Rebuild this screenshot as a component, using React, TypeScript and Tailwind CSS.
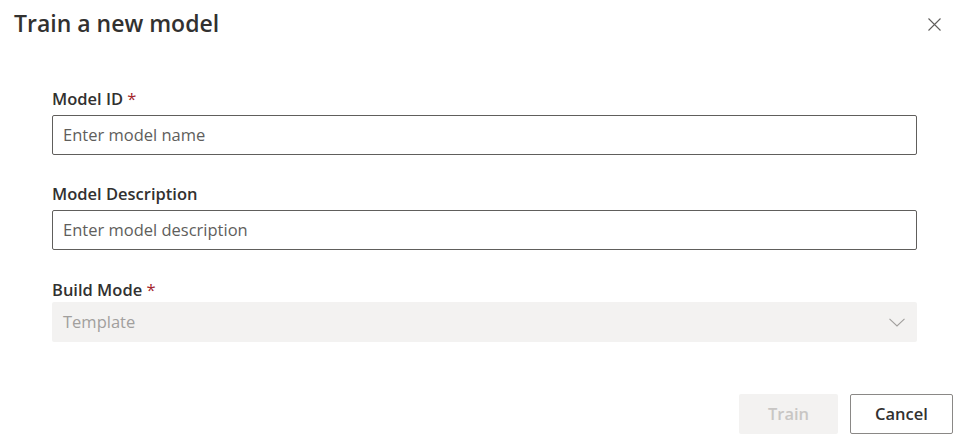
export default function App() {
  return (
    <div className="relative h-[442px] w-[970px] overflow-hidden bg-white text-[#323130] [font-family:'Segoe_UI','Open_Sans',sans-serif]">
      {/* header */}
      <div className="flex h-[44px] items-center pl-[14px] pt-[1px]">
        <h1 className="text-[23px] leading-[32px] font-semibold">Train a new model</h1>
      </div>
      <button className="absolute right-[28px] top-[17px] flex h-[15px] w-[15px] items-center justify-center text-[#605e5c]">
        <svg width="15" height="15" viewBox="0 0 15 15" fill="none" stroke="currentColor" strokeWidth="1.1">
          <path d="M1.5 1.5 L13.5 13.5 M13.5 1.5 L1.5 13.5" />
        </svg>
      </button>

      {/* form */}
      <div className="mt-[43px] flex flex-col pl-[52px] pr-[53px]">
        <label className="mb-[4px] text-[16.5px] leading-[24px] font-semibold">
          Model ID <span className="font-normal text-[#a4262c]">*</span>
        </label>
        <div className="flex h-[40px] items-center rounded-[2px] border border-[#605e5c] px-[10px]">
          <span className="text-[16.5px] text-[#605e5c]">Enter model name</span>
        </div>

        <label className="mt-[27px] mb-[4px] text-[16.5px] leading-[24px] font-semibold">Model Description</label>
        <div className="flex h-[40px] items-center rounded-[2px] border border-[#605e5c] px-[10px]">
          <span className="text-[16.5px] text-[#605e5c]">Enter model description</span>
        </div>

        <label className="mt-[28px] text-[16.5px] leading-[24px] font-semibold">
          Build Mode <span className="font-normal text-[#a4262c]">*</span>
        </label>
        <div className="flex h-[40px] items-center justify-between rounded-[2px] bg-[#f3f2f1] pl-[11px] pr-[12px]">
          <span className="text-[16.5px] text-[#a19f9d]">Template</span>
          <svg width="16" height="9" viewBox="0 0 16 9" fill="none" stroke="#a19f9d" strokeWidth="1.1">
            <path d="M0.5 0.8 L8 8 L15.5 0.8" />
          </svg>
        </div>
      </div>

      {/* footer */}
      <div className="mt-[52px] flex justify-end gap-[12px] pr-[17px]">
        <button className="h-[40px] w-[99px] rounded-[2px] bg-[#f3f2f1] text-[16.5px] font-semibold text-[#c8c6c4]">Train</button>
        <button className="h-[40px] w-[103px] rounded-[2px] border border-[#8a8886] bg-white text-[16.5px] font-semibold text-[#323130]">
          Cancel
        </button>
      </div>
    </div>
  );
}
